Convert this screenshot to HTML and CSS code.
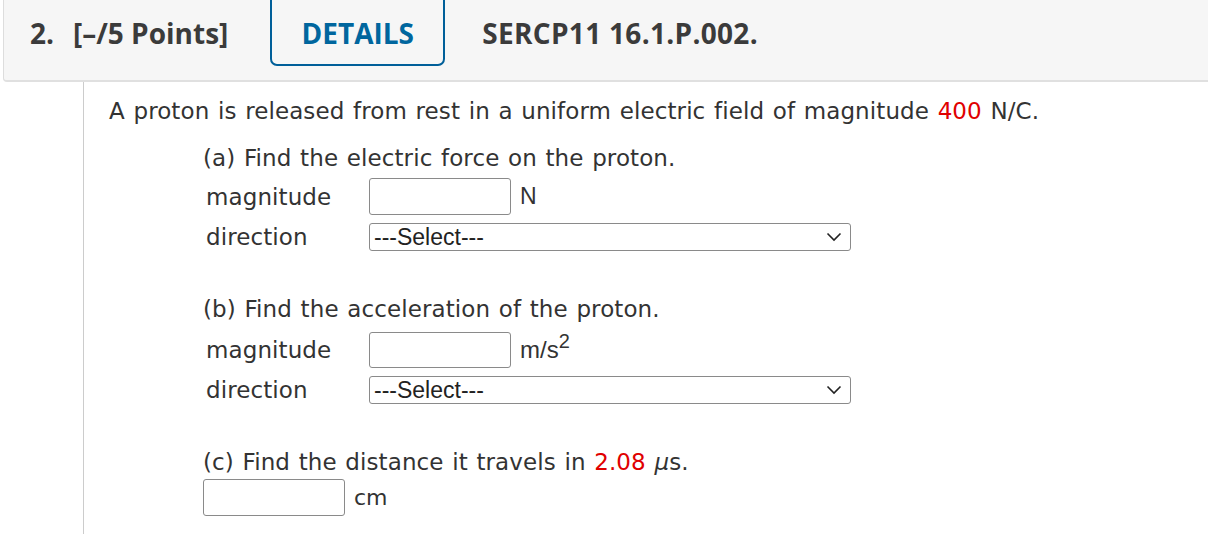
FILE: index.html
```html
<!DOCTYPE html>
<html>
<head>
<meta charset="utf-8">
<link rel="stylesheet" href="styles.css">
</head>
<body>
<div class="header">
  <span class="qnum">2.</span>
  <span class="points">[–/5 Points]</span>
  <span class="details">DETAILS</span>
  <span class="code">SERCP11 16.1.P.002.</span>
</div>
<div class="content">
  <p class="question">A proton is released from rest in a uniform electric field of magnitude <span class="red">400</span> N/C.</p>
  <div class="part">
    <p class="prompt">(a) Find the electric force on the proton.</p>
    <div class="grid">
      <span class="label">magnitude</span>
      <div class="answer"><span class="input"></span><span class="unit">N</span></div>
      <span class="label">direction</span>
      <div class="select">---Select---<svg class="chev" width="16" height="10" viewBox="0 0 16 10"><path d="M1.5 1.5 L8 8 L14.5 1.5" fill="none" stroke="#222" stroke-width="1.6"/></svg></div>
    </div>
  </div>
  <div class="part part-b">
    <p class="prompt">(b) Find the acceleration of the proton.</p>
    <div class="grid">
      <span class="label">magnitude</span>
      <div class="answer"><span class="input"></span><span class="unit">m/s<sup>2</sup></span></div>
      <span class="label">direction</span>
      <div class="select">---Select---<svg class="chev" width="16" height="10" viewBox="0 0 16 10"><path d="M1.5 1.5 L8 8 L14.5 1.5" fill="none" stroke="#222" stroke-width="1.6"/></svg></div>
    </div>
  </div>
  <div class="part part-c">
    <p class="prompt">(c) Find the distance it travels in <span class="red">2.08</span> <i>μ</i>s.</p>
    <div class="answer"><span class="input"></span><span class="unit unit-v">cm</span></div>
  </div>
</div>
</body>
</html>
```
FILE: styles.css
```css
html, body {
  margin: 0;
  padding: 0;
  background: #fff;
}
body {
  width: 1208px;
  height: 534px;
  overflow: hidden;
  font-family: "DejaVu Sans", Verdana, sans-serif;
  color: #333;
}
.header {
  margin-left: 3px;
  height: 82px;
  background: #f6f6f6;
  border-left: 1px solid #ddd;
  border-bottom: 2px solid #e0e0e0;
  border-bottom-left-radius: 4px;
  display: flex;
  align-items: flex-start;
  font-family: "Open Sans", sans-serif;
  font-weight: 700;
  font-size: 28px;
  color: #3b3b3b;
  box-sizing: border-box;
}
.qnum {
  margin-left: 26px;
  margin-top: 14px;
  line-height: 38px;
}
.points {
  margin-left: 19px;
  margin-top: 14px;
  line-height: 38px;
}
.details {
  margin-left: 42px;
  margin-top: -10px;
  width: 175px;
  height: 76px;
  box-sizing: border-box;
  border: 2px solid #005f99;
  border-radius: 7px;
  color: #00669e;
  display: flex;
  align-items: flex-end;
  justify-content: center;
  padding-bottom: 12px;
  line-height: 38px;
}
.code {
  margin-left: 37px;
  margin-top: 14px;
  line-height: 38px;
  letter-spacing: 0.3px;
}
.content {
  margin-left: 83px;
  border-left: 1px solid #ccc;
  padding-left: 25px;
  padding-top: 14px;
  height: 460px;
  font-size: 23px;
  letter-spacing: 0.1px;
  word-spacing: 1.2px;
}
.question {
  margin: 0;
  line-height: 30px;
}
.red {
  color: #e00000;
}
.part {
  margin-left: 94px;
  margin-top: 17px;
}
.part-b {
  margin-top: 42px;
}
.part-c {
  margin-top: 42px;
}
.prompt {
  margin: 0;
  line-height: 30px;
}
.grid {
  display: grid;
  grid-template-columns: 166px auto;
  row-gap: 7px;
  align-items: center;
  margin-top: 5px;
}
.part-b .grid {
  margin-top: 8px;
}
.label {
  padding-left: 3px;
  line-height: 30px;
}
.answer {
  display: flex;
  align-items: center;
  gap: 9px;
}
.part-c .answer {
  margin-top: 2px;
}
.input {
  width: 142px;
  height: 37px;
  box-sizing: border-box;
  border: 1px solid #8a8a8a;
  border-radius: 3px;
  background: #fff;
  display: inline-block;
}
.part-b .input {
  height: 36px;
}
.unit {
  font-family: "Liberation Sans", Arial, sans-serif;
  font-size: 23px;
  letter-spacing: 0;
  color: #333;
}
.part-b .unit {
  font-size: 24px;
}
.unit-v {
  font-family: "DejaVu Sans", Verdana, sans-serif;
  font-size: 22px;
}
.unit sup {
  font-size: 20px;
  line-height: 0;
  vertical-align: 10px;
}
.select {
  width: 482px;
  height: 28px;
  box-sizing: border-box;
  border: 1px solid #8a8a8a;
  border-radius: 3px;
  font-family: "Liberation Sans", Arial, sans-serif;
  font-size: 23px;
  letter-spacing: 0;
  word-spacing: 0;
  color: #222;
  display: flex;
  align-items: center;
  justify-content: space-between;
  padding-left: 4px;
  padding-right: 8px;
}
.chev {
  display: block;
}
```
